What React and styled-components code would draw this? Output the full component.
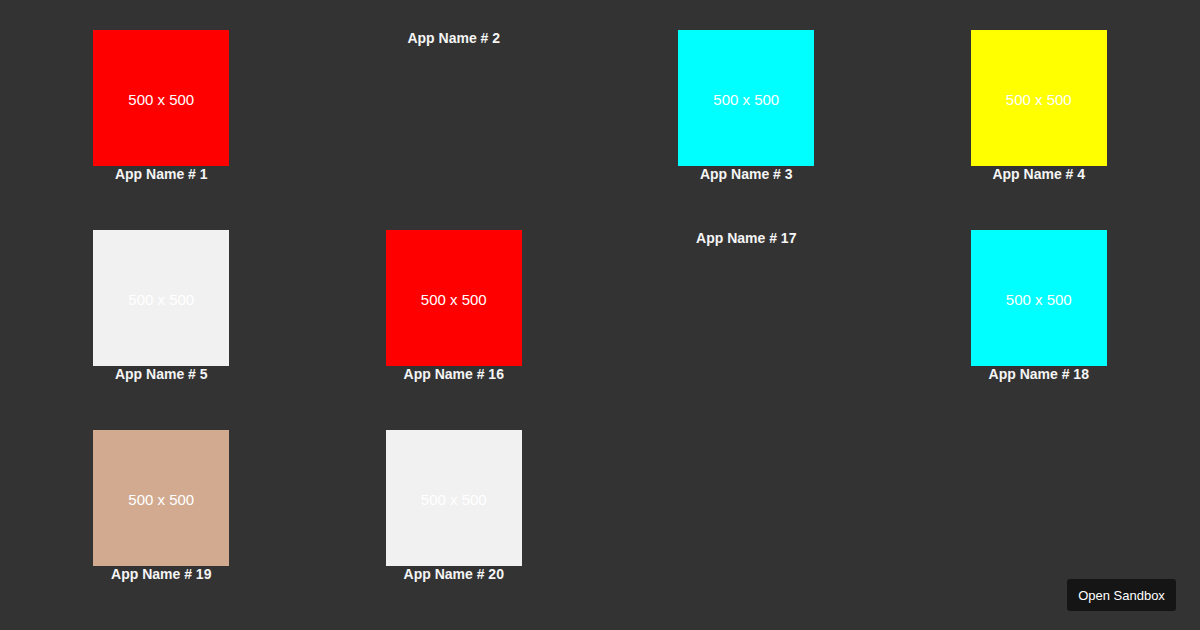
import React from "react";
import styled, { createGlobalStyle } from "styled-components";

const Global = createGlobalStyle`
  html, body { margin: 0; padding: 0; background: #333333; }
  body { font-family: "Liberation Sans", Arial, sans-serif; color: #f5f5f5; }
`;

const Page = styled.div`
  min-height: 630px;
  box-sizing: border-box;
  padding: 30px 15px 0;
`;

const Grid = styled.div`
  display: grid;
  grid-template-columns: repeat(4, 1fr);
  grid-auto-rows: 200px;
`;

const Item = styled.div`
  display: flex;
  flex-direction: column;
  align-items: center;
`;

const Thumb = styled.div`
  width: 136px;
  height: 136px;
  box-sizing: border-box;
  padding-top: 2px;
  background: ${(p) => p.$bg};
  color: #ffffff;
  font-size: 15px;
  display: flex;
  align-items: center;
  justify-content: center;
`;

const Label = styled.div`
  font-size: 14px;
  font-weight: 700;
  line-height: 16px;
  color: #f5f5f5;
`;

const SandboxButton = styled.button`
  position: fixed;
  right: 24px;
  bottom: 19px;
  width: 109px;
  height: 32px;
  border: none;
  border-radius: 3px;
  background: #151515;
  color: #ffffff;
  font-family: "Liberation Sans", Arial, sans-serif;
  font-size: 13px;
  padding: 0;
  cursor: pointer;
`;

const apps = [
  { n: 1, bg: "#ff0000" },
  { n: 2, bg: null },
  { n: 3, bg: "#00ffff" },
  { n: 4, bg: "#ffff00" },
  { n: 5, bg: "#f1f1f1" },
  { n: 16, bg: "#ff0000" },
  { n: 17, bg: null },
  { n: 18, bg: "#00ffff" },
  { n: 19, bg: "#d2aa8f" },
  { n: 20, bg: "#f1f1f1" },
];

export default function App() {
  return (
    <>
      <Global />
      <Page>
        <Grid>
          {apps.map((a) => (
            <Item key={a.n}>
              {a.bg && <Thumb $bg={a.bg}>500 x 500</Thumb>}
              <Label>App Name # {a.n}</Label>
            </Item>
          ))}
        </Grid>
      </Page>
      <SandboxButton>Open Sandbox</SandboxButton>
    </>
  );
}
